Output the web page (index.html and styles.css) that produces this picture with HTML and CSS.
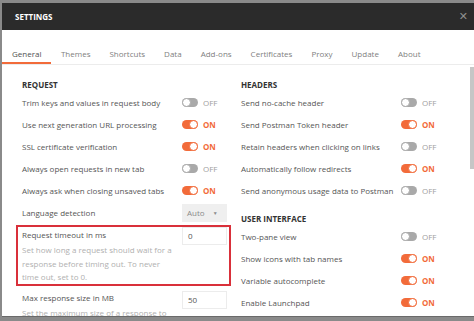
FILE: index.html
```html
<!DOCTYPE html>
<html lang="en">
<head>
    <meta charset="UTF-8">
    <meta name="viewport" content="width=device-width, initial-scale=1.0">
    <title>Settings</title>
    <link rel="stylesheet" href="styles.css">
</head>
<body>
    <div class="modal">
        <div class="modal-header">
            <span class="modal-title">SETTINGS</span>
            <span class="close">&#10005;</span>
        </div>

        <div class="tabs">
            <div class="tab active">General</div>
            <div class="tab">Themes</div>
            <div class="tab">Shortcuts</div>
            <div class="tab">Data</div>
            <div class="tab">Add-ons</div>
            <div class="tab">Certificates</div>
            <div class="tab">Proxy</div>
            <div class="tab">Update</div>
            <div class="tab">About</div>
        </div>

        <div class="content">
            <div class="column">
                <div class="section-title">REQUEST</div>
                <div class="row">
                    <span class="label">Trim keys and values in request body</span>
                    <span class="toggle"></span><span class="state off">OFF</span>
                </div>
                <div class="row">
                    <span class="label">Use next generation URL processing</span>
                    <span class="toggle on"></span><span class="state">ON</span>
                </div>
                <div class="row">
                    <span class="label">SSL certificate verification</span>
                    <span class="toggle on"></span><span class="state">ON</span>
                </div>
                <div class="row">
                    <span class="label">Always open requests in new tab</span>
                    <span class="toggle"></span><span class="state off">OFF</span>
                </div>
                <div class="row">
                    <span class="label">Always ask when closing unsaved tabs</span>
                    <span class="toggle on"></span><span class="state">ON</span>
                </div>
                <div class="row">
                    <span class="label">Language detection</span>
                    <span class="select">Auto <span class="caret">&#9660;</span></span>
                </div>
                <div class="field highlighted">
                    <div class="field-text">
                        <div class="field-label">Request timeout in ms</div>
                        <div class="field-desc">Set how long a request should wait for a response before timing out. To never time out, set to 0.</div>
                    </div>
                    <div class="input">0</div>
                </div>
                <div class="field">
                    <div class="field-text">
                        <div class="field-label">Max response size in MB</div>
                        <div class="field-desc">Set the maximum size of a response to download. To download everything, set to 0.</div>
                    </div>
                    <div class="input">50</div>
                </div>
            </div>

            <div class="column">
                <div class="section-title">HEADERS</div>
                <div class="row">
                    <span class="label">Send no-cache header</span>
                    <span class="toggle"></span><span class="state off">OFF</span>
                </div>
                <div class="row">
                    <span class="label">Send Postman Token header</span>
                    <span class="toggle on"></span><span class="state">ON</span>
                </div>
                <div class="row">
                    <span class="label">Retain headers when clicking on links</span>
                    <span class="toggle"></span><span class="state off">OFF</span>
                </div>
                <div class="row">
                    <span class="label">Automatically follow redirects</span>
                    <span class="toggle on"></span><span class="state">ON</span>
                </div>
                <div class="row">
                    <span class="label">Send anonymous usage data to Postman</span>
                    <span class="toggle"></span><span class="state off">OFF</span>
                </div>

                <div class="section-title spaced">USER INTERFACE</div>
                <div class="row">
                    <span class="label">Two-pane view</span>
                    <span class="toggle"></span><span class="state off">OFF</span>
                </div>
                <div class="row">
                    <span class="label">Show icons with tab names</span>
                    <span class="toggle on"></span><span class="state">ON</span>
                </div>
                <div class="row">
                    <span class="label">Variable autocomplete</span>
                    <span class="toggle on"></span><span class="state">ON</span>
                </div>
                <div class="row">
                    <span class="label">Enable Launchpad</span>
                    <span class="toggle on"></span><span class="state">ON</span>
                </div>
            </div>

            <div class="scrollbar"></div>
        </div>
    </div>
</body>
</html>
```

FILE: styles.css
```css
html, body {
    margin: 0;
    height: 100%;
}

body {
    background: #8a8a8a;
    font-family: "Open Sans", "Noto Sans", sans-serif;
    font-size: 8px;
    color: #555;
    overflow: hidden;
}

.modal {
    margin: 3px 0 0 2px;
    height: 313px;
    background: #fff;
    overflow: hidden;
    box-shadow: 0 1px 0 #6a6a6a;
}

.modal-header {
    height: 27px;
    background: #2b2b2b;
    display: flex;
    align-items: center;
    justify-content: space-between;
    padding: 0 6px 0 13px;
}

.modal-title {
    color: #fff;
    font-weight: 700;
    font-size: 8px;
}

.close {
    color: #8f8f8f;
    font-family: "DejaVu Sans", sans-serif;
    font-size: 11px;
}

.tabs {
    display: flex;
    height: 35px;
    border-bottom: 1px solid #ececec;
    box-sizing: border-box;
}

.tab {
    padding: 17px 9.5px 0;
    color: #808080;
    line-height: 13px;
    box-sizing: border-box;
    height: 34px;
}

.tab.active {
    padding: 17px 10px 0;
    color: #505050;
    border-bottom: 2px solid #f26b3a;
}

.content {
    position: relative;
    display: flex;
    padding: 12px 0 0 20px;
}

.column {
    width: 219px;
    flex-shrink: 0;
}

.section-title {
    font-weight: 700;
    color: #333;
    padding-top: 2px;
    line-height: 12px;
}

.section-title.spaced {
    margin-top: 10px;
}

.row {
    display: flex;
    align-items: center;
    height: 22px;
}

.label {
    width: 160px;
    flex-shrink: 0;
    color: #555;
    white-space: nowrap;
}

.toggle {
    position: relative;
    width: 16px;
    height: 9px;
    border-radius: 5px;
    background: #a9a9a9;
    box-sizing: border-box;
}

.toggle::after {
    content: '';
    position: absolute;
    top: 0;
    left: 0;
    width: 9px;
    height: 9px;
    border-radius: 50%;
    background: #fff;
    border: 1.5px solid #a9a9a9;
    box-sizing: border-box;
}

.toggle.on {
    background: #f26b3a;
}

.toggle.on::after {
    left: auto;
    right: 0;
    border-color: #f26b3a;
}

.state {
    margin-left: 5px;
    color: #f26b3a;
    font-weight: 700;
}

.state.off {
    color: #a0a0a0;
    font-weight: 400;
}

.select {
    width: 45px;
    height: 18px;
    margin-top: 1px;
    background: #efefef;
    color: #8a8a8a;
    padding-left: 5px;
    box-sizing: border-box;
    line-height: 18px;
}

.caret {
    font-size: 5px;
    margin-left: 6px;
    vertical-align: 1px;
}

.field {
    display: flex;
    align-items: flex-start;
    margin-top: 4px;
}

.field.highlighted {
    width: fit-content;
    margin: 2px 0 0 -6px;
    padding: 0 2px 0 4px;
    border: 2px solid #d9303a;
}

.field-text {
    width: 160px;
    flex-shrink: 0;
}

.field-label {
    line-height: 16px;
    color: #555;
}

.field-desc {
    width: 152px;
    line-height: 13.5px;
    color: #b0b0b0;
}

.input {
    width: 45px;
    height: 18px;
    border: 1px solid #ececec;
    box-sizing: border-box;
    padding-left: 5px;
    line-height: 16px;
    color: #555;
}

.field + .field .input {
    margin-top: 1px;
}

.scrollbar {
    position: absolute;
    top: 2px;
    right: 0;
    width: 4px;
    height: 102px;
    background: #c6c6c6;
}
```
